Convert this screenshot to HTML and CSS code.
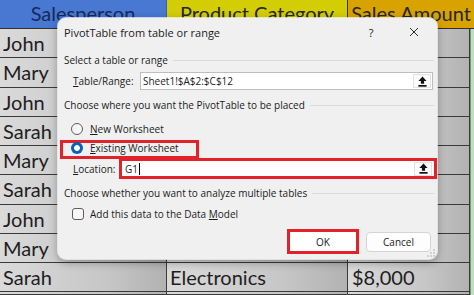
FILE: index.html
```html
<!DOCTYPE html>
<html lang="en">
<head>
    <meta charset="UTF-8">
    <title>PivotTable from table or range</title>
    <link rel="stylesheet" href="styles.css">
</head>
<body>
    <div class="sheet">
        <div class="hd blue">Salesperson</div>
        <div class="hd yellow">Product Category</div>
        <div class="hd orange">Sales Amount</div>

        <!-- middle and right cells of these rows sit under the dialog -->
        <div class="cell">John</div><div class="cell"></div><div class="cell"></div><div class="edge"></div>
        <div class="cell">Mary</div><div class="cell"></div><div class="cell"></div><div class="edge"></div>
        <div class="cell">John</div><div class="cell"></div><div class="cell"></div><div class="edge"></div>
        <div class="cell">Sarah</div><div class="cell"></div><div class="cell"></div><div class="edge"></div>
        <div class="cell">Mary</div><div class="cell"></div><div class="cell"></div><div class="edge"></div>
        <div class="cell">Sarah</div><div class="cell"></div><div class="cell"></div><div class="edge"></div>
        <div class="cell">John</div><div class="cell"></div><div class="cell"></div><div class="edge"></div>
        <div class="cell">Mary</div><div class="cell"></div><div class="cell"></div><div class="edge"></div>
        <div class="cell">Sarah</div><div class="cell">Electronics</div><div class="cell">$8,000</div><div class="edge"></div>
        <div class="cell"></div><div class="cell"></div><div class="cell"></div><div class="edge"></div>
    </div>

    <div class="dialog">
        <div class="titlebar">
            <span class="title">PivotTable from table or range</span>
            <span class="help">?</span>
            <svg class="close" width="10" height="10" viewBox="0 0 10 10"><path d="M1 1 L9 9 M9 1 L1 9" stroke="#2a2a2a" stroke-width="1"/></svg>
        </div>

        <div class="group"><span>Select a table or range</span><i class="rule"></i></div>
        <div class="field range">
            <label><u>T</u>able/Range:</label>
            <div class="input">Sheet1!$A$2:$C$12
                <span class="pick"><svg width="9" height="11" viewBox="0 0 9 11"><path d="M4.5 0.5 L8.6 5 H6.1 V7.8 H2.9 V5 H0.4 Z" fill="#111"/><rect x="0.4" y="9" width="8.2" height="1.7" fill="#111"/></svg></span>
            </div>
        </div>

        <div class="group g2"><span>Choose where you want the PivotTable to be placed</span><i class="rule"></i></div>
        <div class="option"><span class="radio"></span><span><u>N</u>ew Worksheet</span></div>
        <div class="option marked"><span class="radio on"></span><span><u>E</u>xisting Worksheet</span></div>
        <div class="field location">
            <label><u>L</u>ocation:</label>
            <div class="input">G1<span class="caret"></span>
                <span class="pick"><svg width="9" height="11" viewBox="0 0 9 11"><path d="M4.5 0.5 L8.6 5 H6.1 V7.8 H2.9 V5 H0.4 Z" fill="#111"/><rect x="0.4" y="9" width="8.2" height="1.7" fill="#111"/></svg></span>
            </div>
        </div>

        <div class="group g3"><span>Choose whether you want to analyze multiple tables</span><i class="rule"></i></div>
        <div class="check"><span class="box"></span><span>Add this data to the Data <u>M</u>odel</span></div>

        <div class="buttons">
            <button class="ok">OK</button>
            <button class="cancel">Cancel</button>
        </div>

        <svg class="grip" width="8" height="8" viewBox="0 0 8 8">
            <circle cx="7" cy="1" r="0.8" fill="#a8a8a8"/>
            <circle cx="7" cy="4" r="0.8" fill="#a8a8a8"/>
            <circle cx="4" cy="4" r="0.8" fill="#a8a8a8"/>
            <circle cx="7" cy="7" r="0.8" fill="#a8a8a8"/>
            <circle cx="4" cy="7" r="0.8" fill="#a8a8a8"/>
            <circle cx="1" cy="7" r="0.8" fill="#a8a8a8"/>
        </svg>
    </div>
</body>
</html>
```

FILE: styles.css
```css
body {
    margin: 0;
    width: 474px;
    height: 295px;
    overflow: hidden;
    position: relative;
    background: #c4c4c4;
    font-family: Lato, "Liberation Sans", sans-serif;
}

/* spreadsheet behind the dialog */
.sheet {
    height: 295px;
    overflow: hidden;
    display: grid;
    grid-template-columns: 167px 181px 122px 4px;
    grid-template-rows: 29px repeat(9, 29.25px) 1fr;
}
.hd {
    display: flex;
    align-items: center;
    justify-content: center;
    padding-bottom: 2px;
    font-size: 20px;
    white-space: nowrap;
    overflow: hidden;
    box-sizing: border-box;
    border-bottom: 1px solid #2f2f2f;
    border-right: 1px solid #2f2f2f;
    color: #262626;
}
.blue { background: #4878d2; color: #17295a; border-right-color: #3a5fa8; }
.yellow { background: #d3cd06; }
.orange { background: #d8a300; grid-column: span 2; border-right: none; }

.cell {
    display: flex;
    align-items: center;
    padding-left: 3px;
    font-size: 20px;
    color: #1e1e1e;
    white-space: nowrap;
    overflow: hidden;
    box-sizing: border-box;
    border-bottom: 1px solid #3a3a3a;
    border-right: 1px solid #3a3a3a;
    background: linear-gradient(90deg, #dadada, #c6c6c6 65%, #b2b2b2);
}
.cell:nth-child(4n+2) { padding-left: 4px; }
.edge {
    background: #c2dcc2;
    border-left: 1px solid #6f9f6f;
}

/* dialog */
.dialog {
    position: absolute;
    left: 58px;
    top: 18px;
    width: 379px;
    height: 241px;
    box-sizing: border-box;
    background: #f0f0f0;
    border-radius: 8px;
    box-shadow: 0 0 0 1px rgba(255, 255, 255, 0.7), 0 3px 10px rgba(0, 0, 0, 0.35);
    font-family: "Open Sans", "Noto Sans", sans-serif;
    font-size: 10px;
    color: #1b1b1b;
    display: flex;
    flex-direction: column;
}
.titlebar {
    height: 28px;
    display: flex;
    align-items: center;
    padding: 0 18px 0 6px;
}
.title { font-size: 11px; }
.help { margin-left: auto; width: 10px; text-align: center; font-size: 11px; }
.close { margin-left: 33px; }

.group {
    height: 16px;
    margin-top: 6px;
    display: flex;
    align-items: center;
    padding: 0 3px 0 6px;
}
.g2 { margin-top: 7px; }
.g3 { margin-top: 6px; }
.rule {
    flex: 1;
    height: 1px;
    margin-left: 5px;
    background: #dadada;
}

.field {
    display: flex;
    align-items: center;
    padding-left: 15px;
}
.range { height: 18px; margin-top: 4px; }
.range label { width: 67px; }
.location { height: 21px; margin-top: -1px; }
.location label { width: 46px; }

.input {
    height: 100%;
    box-sizing: border-box;
    display: flex;
    align-items: center;
    background: #fff;
}
.range .input {
    width: 293px;
    border: 1px solid #bdbdbd;
    padding-left: 2px;
}
.location .input {
    width: 318px;
    border: 3px solid #e3212b;
    padding-left: 3px;
}
.caret {
    width: 1px;
    height: 12px;
    margin-left: 1px;
    background: #000;
}
.pick {
    margin-left: auto;
    margin-right: 1px;
    width: 18px;
    height: 14px;
    box-sizing: border-box;
    border: 1px solid #e2e2e2;
    background: #fbfbfb;
    display: flex;
    align-items: center;
    justify-content: center;
}
.location .pick { margin-right: 2px; }

.option {
    height: 16px;
    margin-top: 8px;
    display: flex;
    align-items: center;
    padding-left: 13px;
}
.option.marked {
    margin-top: 3px;
    margin-left: 2px;
    width: 139px;
    height: 19px;
    box-sizing: border-box;
    border: 3px solid #e3212b;
    padding: 0 0 3px 8px;
}
.radio {
    width: 12px;
    height: 12px;
    box-sizing: border-box;
    border: 1px solid #5c5c5c;
    border-radius: 50%;
    background: #f7f7f7;
    margin-right: 7px;
}
.radio.on {
    border: none;
    background: radial-gradient(circle, #fff 2.6px, #0a5fc0 3.2px);
}

.check {
    height: 16px;
    margin-top: 5px;
    display: flex;
    align-items: center;
    padding-left: 14px;
}
.box {
    width: 12px;
    height: 12px;
    box-sizing: border-box;
    border: 1px solid #5c5c5c;
    border-radius: 3px;
    background: #f7f7f7;
    margin-right: 6px;
}

.buttons {
    height: 25px;
    margin-top: 7px;
    display: flex;
    justify-content: flex-end;
    align-items: center;
    gap: 7px;
    padding-right: 6px;
}
button {
    font-family: inherit;
    font-size: 10px;
    color: #1b1b1b;
    padding: 0;
    box-sizing: border-box;
}
.ok {
    width: 72px;
    height: 25px;
    border: 3px solid #e3212b;
    background: #fff;
}
.cancel {
    width: 65px;
    height: 20px;
    border: 1px solid #d4d4d4;
    border-radius: 4px;
    background: #fdfdfd;
}
.grip {
    position: absolute;
    right: 2px;
    bottom: 2px;
}
```
